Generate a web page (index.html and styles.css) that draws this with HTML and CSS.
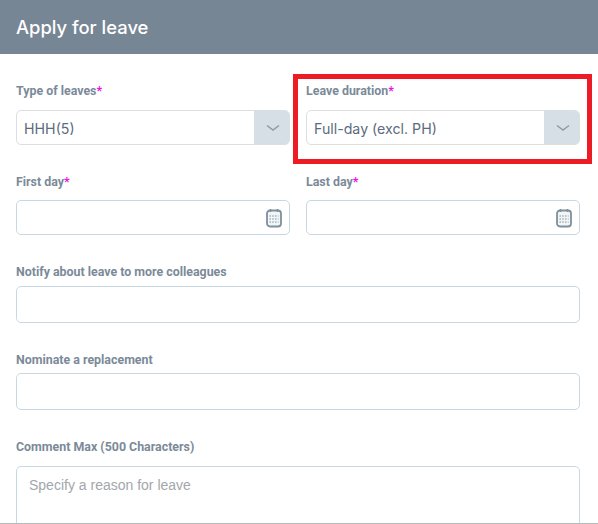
FILE: index.html
```html
<!DOCTYPE html>
<html lang="en">

<head>
    <meta charset="UTF-8">
    <title>Apply for leave</title>
    <link rel="stylesheet" href="styles.css">
</head>

<body>
    <div class="dialog">
        <div class="dialog-head">Apply for leave</div>

        <form class="leave-form">
            <div class="row row-type">
                <div class="field">
                    <label>Type of leaves<span class="req">*</span></label>
                    <div class="select">
                        <span class="select-value">HHH(5)</span>
                        <span class="select-btn">
                            <svg width="14" height="8" viewBox="0 0 14 8"><path d="M1 1.5l6 4.5 6-4.5" fill="none" stroke="#8b9cab" stroke-width="1.5"/></svg>
                        </span>
                    </div>
                </div>
                <div class="field">
                    <label>Leave duration<span class="req">*</span></label>
                    <div class="select">
                        <span class="select-value">Full-day (excl. PH)</span>
                        <span class="select-btn">
                            <svg width="14" height="8" viewBox="0 0 14 8"><path d="M1 1.5l6 4.5 6-4.5" fill="none" stroke="#8b9cab" stroke-width="1.5"/></svg>
                        </span>
                    </div>
                </div>
            </div>

            <div class="row row-days">
                <div class="field">
                    <label>First day<span class="req">*</span></label>
                    <div class="input date">
                        <svg class="cal" width="16" height="20" viewBox="0 0 16 20">
                            <rect x="1" y="2.5" width="14" height="16" rx="3" fill="#f3f6f7" stroke="#7d909c" stroke-width="1.8"/>
                            <path d="M4.5 1v3M11.5 1v3" stroke="#7d909c" stroke-width="1.6"/>
                            <path d="M3.5 8h9M3.5 11h9M3.5 14h9" stroke="#9aabb5" stroke-width="1.3" stroke-dasharray="1.4 1.4"/>
                        </svg>
                    </div>
                </div>
                <div class="field">
                    <label>Last day<span class="req">*</span></label>
                    <div class="input date">
                        <svg class="cal" width="16" height="20" viewBox="0 0 16 20">
                            <rect x="1" y="2.5" width="14" height="16" rx="3" fill="#f3f6f7" stroke="#7d909c" stroke-width="1.8"/>
                            <path d="M4.5 1v3M11.5 1v3" stroke="#7d909c" stroke-width="1.6"/>
                            <path d="M3.5 8h9M3.5 11h9M3.5 14h9" stroke="#9aabb5" stroke-width="1.3" stroke-dasharray="1.4 1.4"/>
                        </svg>
                    </div>
                </div>
            </div>

            <div class="field field-notify">
                <label>Notify about leave to more colleagues</label>
                <div class="input tall"></div>
            </div>

            <div class="field field-replace">
                <label>Nominate a replacement</label>
                <div class="input tall"></div>
            </div>

            <div class="field field-comment">
                <label>Comment Max (500 Characters)</label>
                <div class="textarea">Specify a reason for leave</div>
            </div>
        </form>

        <!-- red box drawn over the screenshot -->
        <div class="highlight"></div>
    </div>
</body>

</html>
```

FILE: styles.css
```css
html {
    box-sizing: border-box;
    background: #fff;
}

*,
*:before,
*:after {
    box-sizing: inherit;
}

body {
    margin: 0;
    height: 524px;
    overflow: hidden;
    font-family: Roboto, 'Liberation Sans', sans-serif;
}

.dialog {
    position: relative;
    height: 524px;
    overflow: hidden;
    border-bottom: 1px solid #b4bcbc;
}

.dialog-head {
    height: 54px;
    padding: 0 16px;
    display: flex;
    align-items: center;
    background: #778695;
    color: #fff;
    font-family: Inter, 'Open Sans', sans-serif;
    font-size: 18.4px;
    font-weight: 500;
}

.leave-form {
    padding: 0 18px 0 16px;
}

.row {
    display: flex;
    gap: 16px;
}

.row .field {
    flex: 1;
}

.row-type {
    padding-top: 29px;
}

.row-days {
    padding-top: 29px;
}

label {
    display: block;
    height: 16px;
    line-height: 16px;
    color: #7b8a99;
    font-size: 12.4px;
    font-weight: 700;
}

.req {
    color: #e815e0;
}

.select {
    display: flex;
    height: 35px;
    margin-top: 11px;
    overflow: hidden;
    border: 1px solid #dcdfe0;
    border-radius: 5px;
}

.select-value {
    flex: 1;
    padding: 1px 0 0 7px;
    line-height: 34px;
    color: #5c6b7e;
    font-family: Inter, 'Open Sans', sans-serif;
    font-size: 14.2px;
}

.select-btn {
    width: 35px;
    padding-left: 2px;
    display: flex;
    align-items: center;
    justify-content: center;
    background: #d6dfe6;
}

.input {
    border: 1px solid #c8d8e2;
    border-radius: 5px;
    background: #fff;
}

.date {
    height: 35px;
    margin-top: 10px;
    display: flex;
    align-items: center;
    justify-content: flex-end;
    padding-right: 7px;
}

.tall {
    height: 37px;
    margin-top: 6px;
}

.field-notify {
    margin-top: 29px;
}

.field-replace {
    margin-top: 29px;
}

.field-comment {
    margin-top: 29px;
}

.field-replace .tall {
    margin-top: 5px;
}

.textarea {
    height: 90px;
    margin-top: 11px;
    padding: 10px 12px;
    border: 1px solid #c8d8e2;
    border-radius: 5px;
    color: #a3a7ab;
    font-family: 'Liberation Sans', sans-serif;
    font-size: 14px;
    line-height: 16px;
}

.highlight {
    position: absolute;
    left: 293px;
    top: 74px;
    width: 299px;
    height: 90px;
    border: 5px solid #ed1c24;
}
```
